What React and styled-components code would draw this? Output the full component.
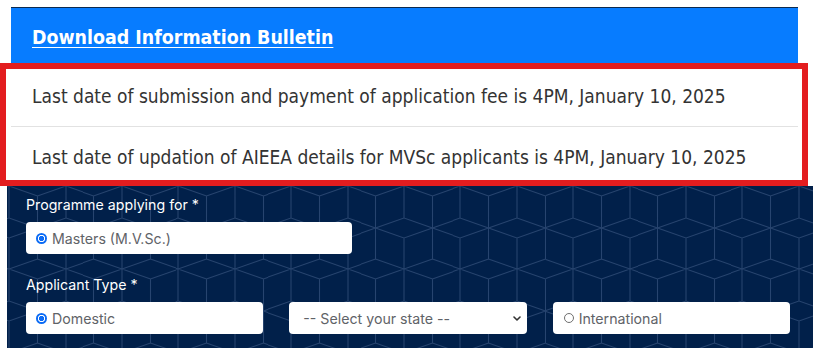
import React from 'react';
import styled, { createGlobalStyle, css } from 'styled-components';

const Global = createGlobalStyle`
  html, body { margin: 0; padding: 0; background: #fff; }
  body { font-family: "DejaVu Sans Condensed", "DejaVu Sans", sans-serif; }
  * { box-sizing: border-box; }
`;

const W = 56.4;
const H = 83.4;
const A = 28.2;
const B = 10;
const C = 31.7;

function cubeTile() {
  const centers = [
    [A, 0],
    [A, H],
    [0, H / 2],
    [W, H / 2],
  ];
  let d = '';
  centers.forEach(([x, y]) => {
    d += `M${x - A} ${y}L${x} ${y - B}L${x + A} ${y}L${x} ${y + B}Z`;
    d += `M${x - A} ${y}V${y + C}M${x} ${y + B}V${y + B + C}M${x + A} ${y}V${y + C}`;
  });
  const svg = `<svg xmlns="http://www.w3.org/2000/svg" width="${W}" height="${H}" viewBox="0 0 ${W} ${H}"><path d="${d}" fill="none" stroke="#34507a" stroke-opacity="0.75" stroke-width="1"/></svg>`;
  return `url("data:image/svg+xml,${encodeURIComponent(svg)}")`;
}

const Page = styled.div`
  position: relative;
  width: 825px;
  height: 358px;
  padding-top: 7px;
  overflow: hidden;
`;

const Notices = styled.section`
  margin-left: 11px;
  width: 787px;
  background: #fff;
`;

const Banner = styled.div`
  height: 59px;
  border-top: 1px solid #0c2a4f;
  background: #077cff;
  display: flex;
  align-items: center;
  padding-left: 21px;
`;

const BannerLink = styled.a`
  color: #fff;
  font-weight: bold;
  font-size: 19.4px;
  text-decoration: underline;
  text-underline-offset: 3px;
  cursor: pointer;
`;

const NoticeRow = styled.div`
  padding: 18px 21px;
  line-height: 24px;
  font-size: 19px;
  color: #333;
  white-space: nowrap;
  border-bottom: 1px solid #e2e2e2;
  &:last-child {
    border-bottom: none;
    padding-bottom: 17px;
  }
`;

const FormPanel = styled.section`
  margin-left: 7px;
  width: 806px;
  height: 162px;
  padding: 9px 23px 0 19px;
  background-color: #01204a;
  background-image: ${cubeTile()};
  background-size: ${W}px ${H}px;
  background-position: 2.3px 0;
  display: flex;
  flex-direction: column;
  gap: 21px;
  font-family: Inter, "Open Sans", sans-serif;
`;

const Field = styled.div`
  display: flex;
  flex-direction: column;
  gap: 7px;
`;

const Label = styled.label`
  color: #fff;
  font-size: 14.2px;
  line-height: 20px;
`;

const Grid = styled.div`
  display: grid;
  grid-template-columns: repeat(3, 1fr);
  gap: 26px;
`;

const Control = styled.div`
  height: 32px;
  width: ${p => p.$width || 'auto'};
  background: #fff;
  border-radius: 4px;
  display: flex;
  align-items: center;
  justify-content: ${p => (p.$select ? 'space-between' : 'flex-start')};
  padding: ${p => (p.$select ? '0 6px 0 14px' : '0 0 0 10px')};
  gap: 5px;
  font-size: 14.2px;
  color: #5f6368;
`;

const Radio = styled.span`
  flex: none;
  border-radius: 50%;
  ${p =>
    p.$checked
      ? css`
          width: 11px;
          height: 11px;
          background: radial-gradient(circle at center, #0b6bf5 0 2.4px, #fff 2.9px 3.4px, #0b6bf5 3.9px);
        `
      : css`
          width: 10px;
          height: 10px;
          margin-left: 1px;
          border: 1px solid #6f6f6f;
          background: #fff;
        `}
`;

const Chevron = () => (
  <svg width="8" height="5" viewBox="0 0 8 5" aria-hidden="true">
    <path d="M1 1l3 3 3-3" fill="none" stroke="#333" strokeWidth="1.6" strokeLinecap="round" strokeLinejoin="round" />
  </svg>
);

const Highlight = styled.div`
  position: absolute;
  left: 0;
  top: 63px;
  width: 808px;
  height: 123px;
  border: 6px solid #e31d1f;
  pointer-events: none;
`;

export default function App() {
  return (
    <>
      <Global />
      <Page>
        <Notices>
          <Banner>
            <BannerLink>Download Information Bulletin</BannerLink>
          </Banner>
          <NoticeRow>Last date of submission and payment of application fee is 4PM, January 10, 2025</NoticeRow>
          <NoticeRow>Last date of updation of AIEEA details for MVSc applicants is 4PM, January 10, 2025</NoticeRow>
        </Notices>
        <FormPanel>
          <Field>
            <Label>Programme applying for *</Label>
            <Control $width="326px">
              <Radio $checked />
              Masters (M.V.Sc.)
            </Control>
          </Field>
          <Field>
            <Label>Applicant Type *</Label>
            <Grid>
              <Control>
                <Radio $checked />
                Domestic
              </Control>
              <Control $select>
                -- Select your state --
                <Chevron />
              </Control>
              <Control>
                <Radio />
                International
              </Control>
            </Grid>
          </Field>
        </FormPanel>
        <Highlight />
      </Page>
    </>
  );
}
